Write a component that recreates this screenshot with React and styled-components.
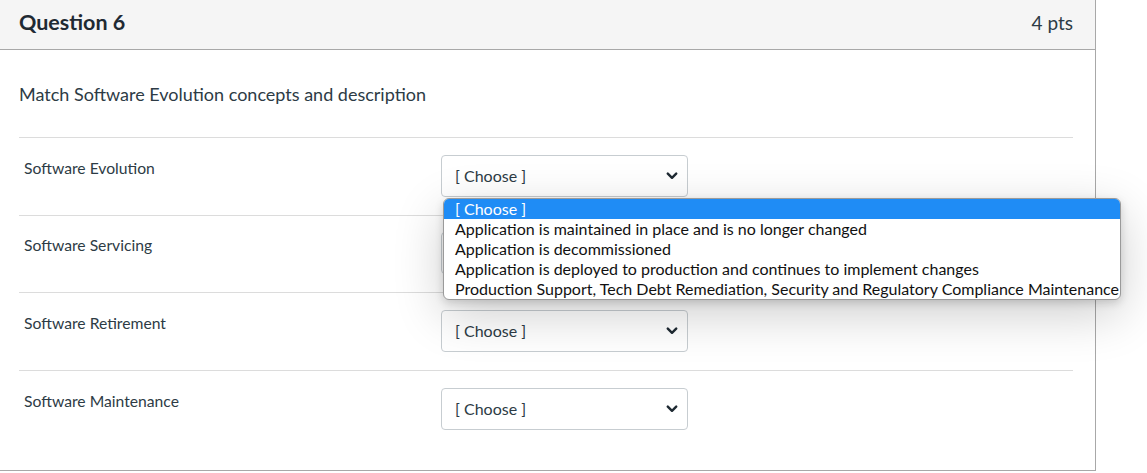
import React from "react";
import styled, { createGlobalStyle } from "styled-components";

const GlobalStyle = createGlobalStyle`
  html, body {
    margin: 0;
    padding: 0;
    background: #ffffff;
  }
  body {
    font-family: Lato, "Noto Sans", sans-serif;
    color: #2d3b45;
  }
`;

const pairs = [
  "Software Evolution",
  "Software Servicing",
  "Software Retirement",
  "Software Maintenance",
];

const options = [
  "[ Choose ]",
  "Application is maintained in place and is no longer changed",
  "Application is decommissioned",
  "Application is deployed to production and continues to implement changes",
  "Production Support, Tech Debt Remediation, Security and Regulatory Compliance Maintenance",
];

function Chevron() {
  return (
    <svg width="12" height="8" viewBox="0 0 12 8">
      <path
        d="M1.8 1.6 L6 5.8 L10.2 1.6"
        fill="none"
        stroke="#1f2a33"
        strokeWidth="2.4"
        strokeLinecap="round"
        strokeLinejoin="round"
      />
    </svg>
  );
}

function App() {
  return (
    <>
      <GlobalStyle />
      <Card>
        <Header>
          <Title>Question 6</Title>
          <Points>4 pts</Points>
        </Header>
        <Body>
          <Prompt>Match Software Evolution concepts and description</Prompt>
          <Rows>
            {pairs.map((label, i) => (
              <Row key={label}>
                <Label>{label}</Label>
                <SelectWrap>
                  <Select>
                    <span>[ Choose ]</span>
                    <Chevron />
                  </Select>
                  {i === 0 && (
                    <OptionList>
                      {options.map((opt, j) => (
                        <Option key={opt} $active={j === 0}>
                          {opt}
                        </Option>
                      ))}
                    </OptionList>
                  )}
                </SelectWrap>
              </Row>
            ))}
          </Rows>
        </Body>
      </Card>
    </>
  );
}

export default App;

const Card = styled.div`
  width: 1097px;
  height: 471px;
  margin-left: -1px;
  border: 1px solid #a8a8a8;
  border-top: none;
  box-sizing: border-box;
  background: #ffffff;
`;

const Header = styled.div`
  height: 50px;
  box-sizing: border-box;
  background: #f5f5f5;
  border-bottom: 1px solid #a8a8a8;
  display: flex;
  align-items: center;
  justify-content: space-between;
  padding: 0 22px 5px 19px;
`;

const Title = styled.h2`
  margin: 0;
  font-size: 21.5px;
  font-weight: 700;
  color: #1f2a33;
`;

const Points = styled.div`
  font-size: 19px;
  color: #2d3b45;
`;

const Body = styled.div`
  padding: 0 22px 0 19px;
`;

const Prompt = styled.p`
  margin: 0;
  padding: 34px 0 32px;
  font-size: 18px;
  line-height: 21px;
  color: #2d3b45;
`;

const Rows = styled.div`
  display: flex;
  flex-direction: column;
`;

const Row = styled.div`
  display: grid;
  grid-template-columns: 422px 247px;
  border-top: 1px solid #dcdcdc;
  padding: 16.5px 0 18.2px;
`;

const Label = styled.div`
  padding: 4px 0 0 5px;
  font-size: 15.7px;
  line-height: 19px;
  color: #2d3b45;
`;

const SelectWrap = styled.div`
  position: relative;
`;

const Select = styled.div`
  height: 42px;
  box-sizing: border-box;
  border: 1px solid #c7cdd1;
  border-radius: 4px;
  background: #ffffff;
  display: flex;
  align-items: center;
  justify-content: space-between;
  padding: 0 9px 0 13px;
  font-size: 16px;
  color: #2d3b45;
`;

const OptionList = styled.div`
  position: absolute;
  top: 43px;
  left: 2px;
  width: 678px;
  box-sizing: border-box;
  background: #ffffff;
  border: 1px solid #9a9a9a;
  border-radius: 6px;
  overflow: hidden;
  box-shadow: 0 14px 50px rgba(0, 0, 0, 0.2), 0 3px 8px rgba(0, 0, 0, 0.15);
  z-index: 10;
`;

const Option = styled.div`
  height: 20px;
  line-height: 20px;
  padding: 0 0 0 11px;
  font-size: 16px;
  white-space: nowrap;
  color: ${(p) => (p.$active ? "#ffffff" : "#111111")};
  background: ${(p) => (p.$active ? "#1f8cf5" : "transparent")};
`;
